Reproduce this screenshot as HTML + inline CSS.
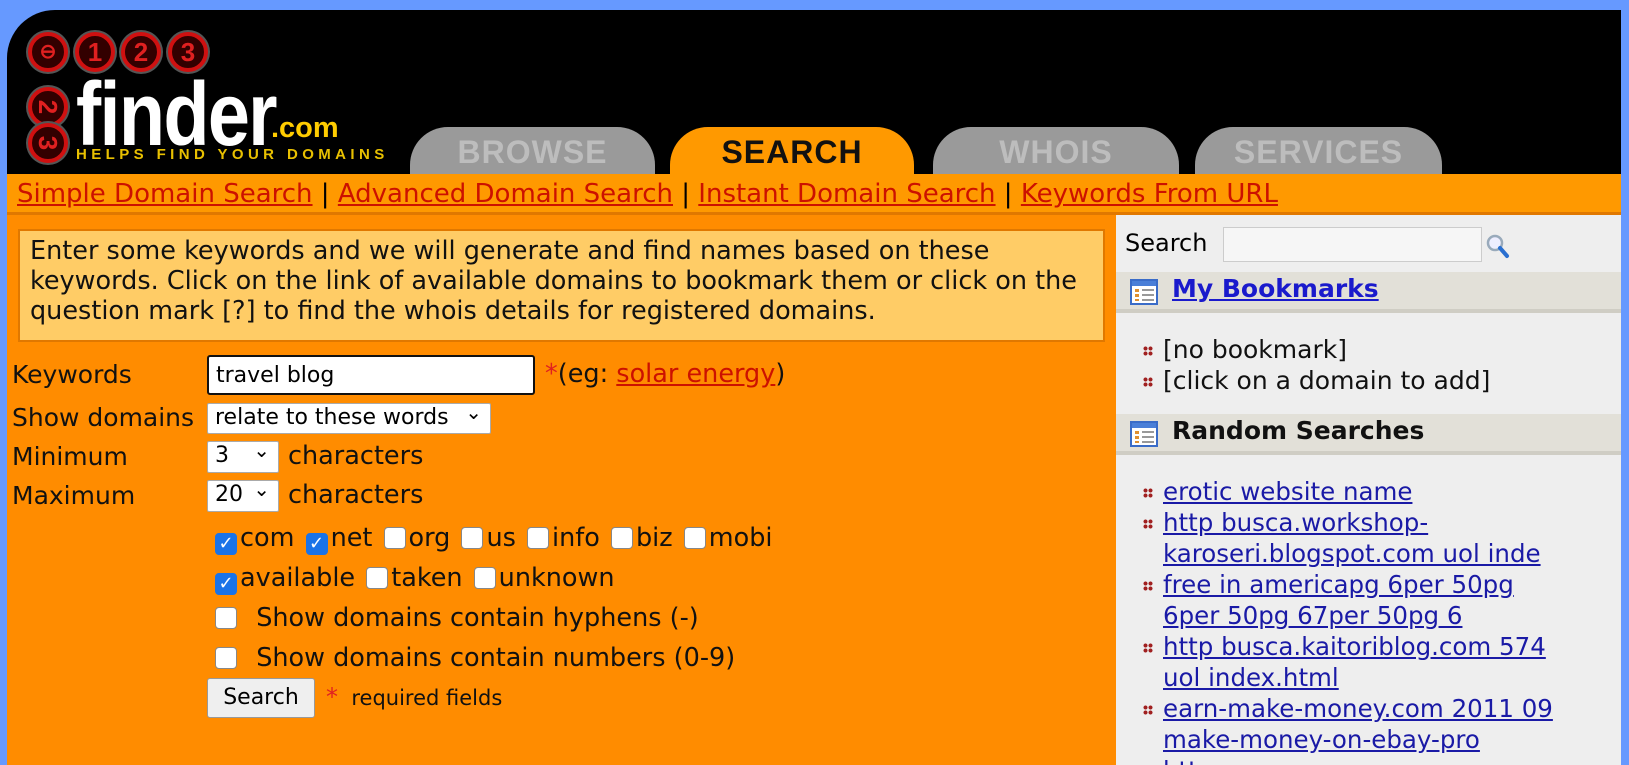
<!DOCTYPE html>
<html><head><meta charset="utf-8"><style>
*{margin:0;padding:0;box-sizing:border-box}
html{overflow:hidden;height:765px}
body{width:1629px;height:765px;overflow:hidden;background:#6699ff;position:relative;font-family:"DejaVu Sans",Verdana,sans-serif}
.abs{position:absolute}
#hdr{left:7px;top:10px;width:1614px;height:165px;background:#000;border-top-left-radius:48px}
.circ{position:absolute;width:40px;height:40px;border-radius:50%;border:4px solid #d01010;background:#300;color:#e02020;font:bold 26px "Liberation Sans",sans-serif;text-align:center;line-height:32px;box-shadow:0 0 0 2px #555}
.tab{position:absolute;top:127px;height:48px;border-radius:38px 38px 0 0;background:#9a9a9a;color:#bdbdbd;font:bold 32px "Liberation Sans",sans-serif;text-align:center;line-height:50px;letter-spacing:1px}
#nav{left:7px;top:174px;width:1614px;height:41px;background:#ff9900;border-bottom:3px solid #e07800;font-family:"DejaVu Sans",sans-serif;font-size:26px;line-height:40px;padding-left:10px;color:#000;white-space:nowrap}
#nav a{color:#cc1100;text-decoration:underline}
#left{left:7px;top:215px;width:1109px;height:550px;background:#ff8c00}
#right{left:1116px;top:215px;width:505px;height:550px;background:#eeeeee}
#info{left:18px;top:229px;width:1087px;height:113px;background:#ffcc66;border:2px solid #e07800;font-family:"DejaVu Sans",sans-serif;font-size:25.5px;line-height:30px;padding:5px 10px;color:#111;white-space:nowrap}
.lbl{position:absolute;left:12px;font-size:25px;font-family:"DejaVu Sans",sans-serif;color:#111}
.sel{position:absolute;background:#fff;border:1px solid #aaa;border-radius:2px;font-size:22px;font-family:"DejaVu Sans",sans-serif;padding-left:7px;line-height:28px;color:#000;white-space:nowrap}
.sel::after{content:"⌄";position:absolute;right:8px;top:-6px;font-size:20px}
.cb{display:inline-block;width:22px;height:22px;border-radius:4px;background:#fff;border:1px solid #888;vertical-align:-3px;margin:0 3px}
.cb.on{background:#1a73e8;border-color:#1a73e8;color:#fff;font-size:18px;line-height:20px;text-align:center;font-weight:bold}
.row{position:absolute;left:212px;font-size:25.5px;font-family:"DejaVu Sans",sans-serif;color:#111;white-space:nowrap}
.bar{position:absolute;left:1116px;width:505px;height:41px;background:#e2e0d8;border-bottom:4px solid #cfcdc4}
.ico{position:absolute;left:14px;top:7px;width:28px;height:26px;border:2px solid #3a6cc8;background:linear-gradient(#4a7fd8 0 5px,#fff 5px);}
.ico::before{content:"";position:absolute;left:3px;top:8px;width:4px;height:12px;background:repeating-linear-gradient(#e09030 0 3px,transparent 3px 5px)}
.ico::after{content:"";position:absolute;left:10px;top:8px;width:12px;height:12px;background:repeating-linear-gradient(#999 0 2px,transparent 2px 5px)}
.bt{position:absolute;left:56px;top:2px;font-size:25px;font-weight:bold}
.list{position:absolute;left:1143px;font-size:24.5px;line-height:31px;color:#111;white-space:nowrap}
.list div{position:relative;padding-left:20px}
.list div::before{content:"";position:absolute;left:0;top:12px;width:10px;height:10px;background:radial-gradient(circle,#a02020 1.8px,transparent 2.2px) 0 0/5px 5px}
.list a{color:#1a1aa6;text-decoration:underline}
</style></head><body>
<div id="hdr" class="abs"></div>
<div class="circ" style="left:28px;top:32px;font-size:20px">⊖</div>
<div class="circ" style="left:75px;top:32px">1</div>
<div class="circ" style="left:121px;top:32px">2</div>
<div class="circ" style="left:168px;top:32px">3</div>
<div class="circ" style="left:28px;top:87px;transform:rotate(90deg)">2</div>
<div class="circ" style="left:28px;top:123px;transform:rotate(90deg)">3</div>
<div class="abs" style="left:76px;top:70px;color:#fff;font:bold 90px 'Liberation Sans Narrow','Liberation Sans',sans-serif;transform:scaleX(.84);transform-origin:left;letter-spacing:-2px;line-height:90px">finder</div>
<div class="abs" style="left:271px;top:112px;color:#ffcc00;font:bold 29px 'Liberation Sans',sans-serif">.com</div>
<div class="abs" style="left:76px;top:146px;color:#e8c000;font:bold 15px 'Liberation Sans',sans-serif;letter-spacing:4.4px;white-space:nowrap">HELPS FIND YOUR DOMAINS</div>
<div class="tab" style="left:410px;width:245px">BROWSE</div>
<div class="tab" style="left:670px;width:244px;background:#ff9900;color:#111">SEARCH</div>
<div class="tab" style="left:933px;width:246px">WHOIS</div>
<div class="tab" style="left:1195px;width:247px">SERVICES</div>
<div id="nav" class="abs"><a>Simple Domain Search</a> | <a>Advanced Domain Search</a> | <a>Instant Domain Search</a> | <a>Keywords From URL</a></div>
<div id="left" class="abs"></div>
<div id="right" class="abs"></div>
<div id="info" class="abs">Enter some keywords and we will generate and find names based on these<br>keywords. Click on the link of available domains to bookmark them or click on the<br>question mark [?] to find the whois details for registered domains.</div>
<div class="lbl" style="top:360px">Keywords</div>
<div class="abs" style="left:207px;top:355px;width:328px;height:40px;background:#fff;border:2px solid #111;border-radius:3px;font-size:22px;font-family:'DejaVu Sans',sans-serif;padding:6px 7px">travel blog</div>
<div class="row" style="left:545px;top:359px"><span style="color:#e02020">*</span>(eg: <a style="color:#cc1100;text-decoration:underline">solar energy</a>)</div>
<div class="lbl" style="top:403px">Show domains</div>
<div class="sel" style="left:207px;top:403px;width:284px;height:31px">relate to these words</div>
<div class="lbl" style="top:442px">Minimum</div>
<div class="sel" style="left:207px;top:441px;width:72px;height:32px">3</div>
<div class="row" style="left:288px;top:441px">characters</div>
<div class="lbl" style="top:481px">Maximum</div>
<div class="sel" style="left:207px;top:480px;width:72px;height:32px">20</div>
<div class="row" style="left:288px;top:480px">characters</div>
<div class="row" style="top:523px"><span class="cb on">✓</span>com <span class="cb on">✓</span>net <span class="cb"></span>org <span class="cb"></span>us <span class="cb"></span>info <span class="cb"></span>biz <span class="cb"></span>mobi</div>
<div class="row" style="top:563px"><span class="cb on">✓</span>available <span class="cb"></span>taken <span class="cb"></span>unknown</div>
<div class="row" style="top:603px"><span class="cb"></span>&nbsp; Show domains contain hyphens (-)</div>
<div class="row" style="top:643px"><span class="cb"></span>&nbsp; Show domains contain numbers (0-9)</div>
<div class="abs" style="left:207px;top:678px;width:108px;height:40px;background:#efefef;border:1px solid #999;border-radius:3px;font-size:22px;font-family:'DejaVu Sans',sans-serif;text-align:center;line-height:38px">Search</div>
<div class="row" style="left:326px;top:683px;font-size:21px"><span style="color:#e02020;font-size:24px">*</span>&nbsp; required fields</div>
<div class="abs" style="left:1125px;top:229px;font-size:24px">Search</div>
<div class="abs" style="left:1223px;top:227px;width:259px;height:35px;background:#f6f6f6;border:1px solid #ccc"></div>
<svg class="abs" style="left:1484px;top:232px" width="28" height="30" viewBox="0 0 28 30"><circle cx="11" cy="11" r="7" fill="#eef" stroke="#9ab" stroke-width="2.5"/><path d="M16 16l7 8" stroke="#2a6fd0" stroke-width="4" stroke-linecap="round"/></svg>
<div class="bar" style="top:272px"><div class="ico"></div><a class="bt" style="color:#1a1acc;text-decoration:underline">My Bookmarks</a></div>
<div class="list" style="top:334px;font-size:25px"><div>[no bookmark]</div><div>[click on a domain to add]</div></div>
<div class="bar" style="top:414px"><div class="ico"></div><span class="bt" style="color:#111">Random Searches</span></div>
<div class="list" style="top:476px">
<div><a>erotic website name</a></div>
<div><a>http busca.workshop-</a><br><a>karoseri.blogspot.com uol inde</a></div>
<div><a>free in americapg 6per 50pg</a><br><a>6per 50pg 67per 50pg 6</a></div>
<div><a>http busca.kaitoriblog.com 574</a><br><a>uol index.html</a></div>
<div><a>earn-make-money.com 2011 09</a><br><a>make-money-on-ebay-pro</a></div>
<div><a>http</a></div>
</div>
</body></html>
